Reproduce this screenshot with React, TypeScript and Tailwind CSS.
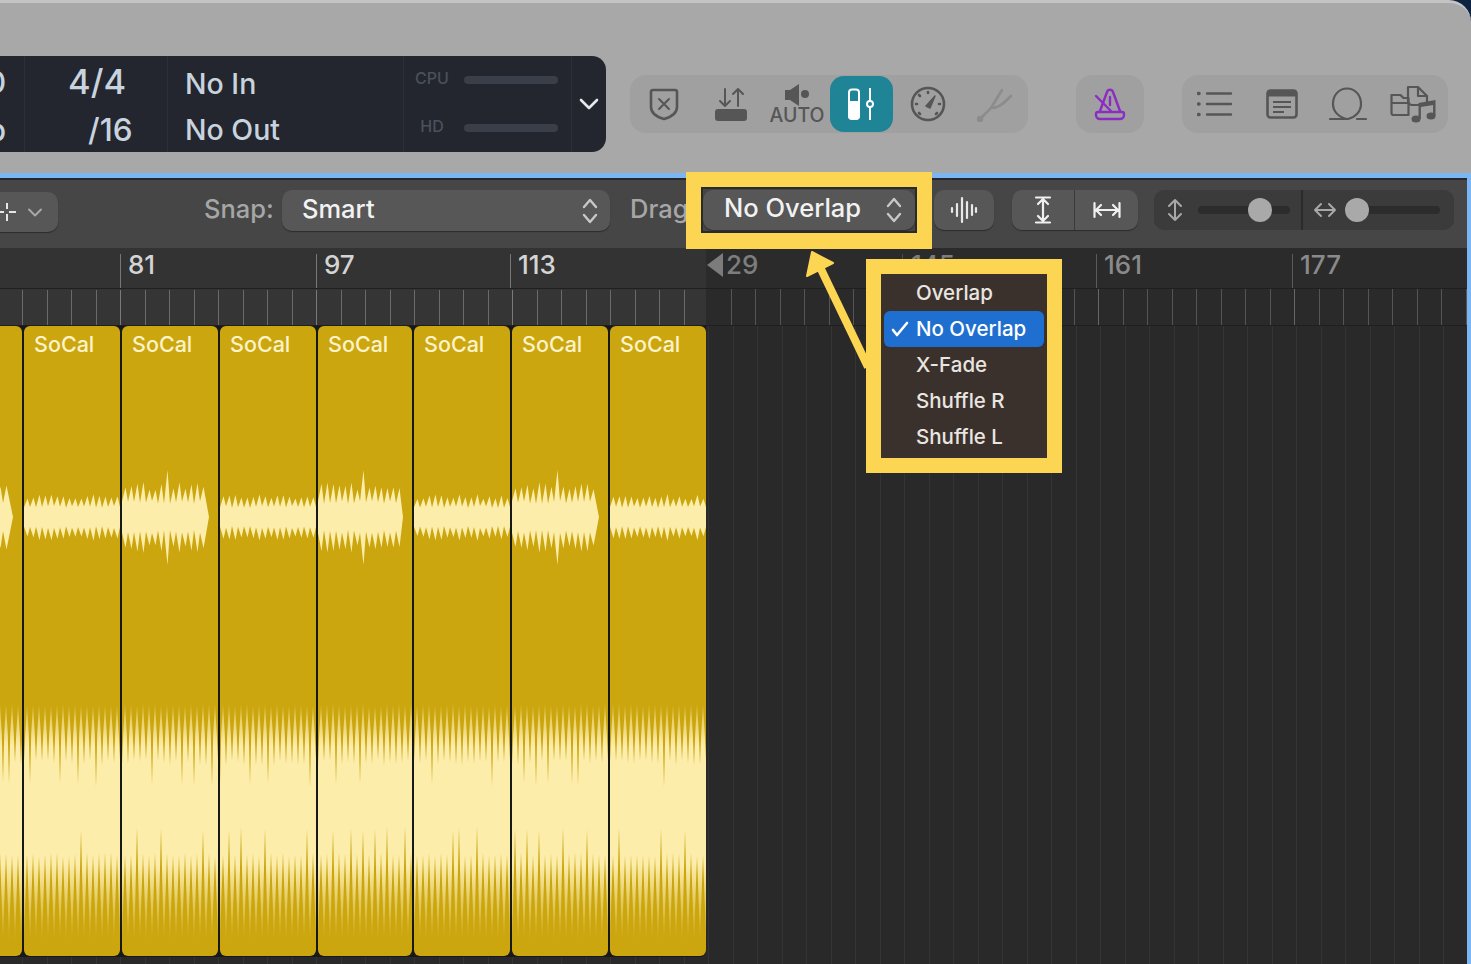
import { useMemo } from 'react'

const FONT = "font-['Inter','Liberation_Sans',sans-serif]"

const GOLD = '#cba60f'
const PALE = '#fcedab'

// small pseudo random so each region keeps the same spikes
const rng = (seed: number) => {
  let s = seed
  return () => {
    s = (s * 9301 + 49297) % 233280
    return s / 233280
  }
}

const buildUpper = (w: number, big: boolean, seed: number) => {
  const r = rng(seed)
  const cy = 191
  const end = big ? w - 9 : w
  const top: string[] = []
  const bottom: string[] = []
  for (let x = 0; x < end - 5; x += 6) {
    let peak = big ? 27 + r() * 8 : 18 + r() * 5
    const valley = big ? 13 + r() * 3 : 9 + r() * 2
    if (big && x >= 42 && x < 48) peak = 47
    top.push(`L${x} ${cy - valley} L${x + 3.5} ${cy - peak}`)
    bottom.unshift(`L${x + 3.5} ${cy + peak + 1} L${x} ${cy + valley}`)
  }
  const tip = big ? `L${end} ${cy}` : `L${end} ${cy - 10} L${end} ${cy + 10}`
  return `M0 ${cy} ${top.join(' ')} ${tip} ${bottom.join(' ')} Z`
}

const buildLower = (w: number, seed: number) => {
  const r = rng(seed)
  const top: string[] = []
  const bottom: string[] = []
  for (let x = 0; x < w; x += 6) {
    const deep = r() > 0.78
    top.push(`L${x} ${434 + r() * 6 + (deep ? 22 : 0)} L${x + 1.2} ${408} L${x + 3} ${377 + r() * 3} L${x + 4.8} ${408}`)
    const high = r() > 0.82
    bottom.unshift(`L${x + 6} ${621} L${x + 5} ${585} L${x + 3} ${530 - r() * 4 - (high ? 26 : 0)} L${x + 1} ${585}`)
  }
  return `M0 434 ${top.join(' ')} L${w} 434 ${bottom.join(' ')} L0 621 Z`
}

function Waveform({ w, big, seed }: { w: number; big: boolean; seed: number }) {
  const upper = useMemo(() => buildUpper(w, big, seed), [w, big, seed])
  const lower = useMemo(() => buildLower(w, seed + 7), [w, seed])
  return (
    <svg className="absolute inset-0" width={w} height={630} viewBox={`0 0 ${w} 630`}>
      <defs>
        <linearGradient id="lowerFill" gradientUnits="userSpaceOnUse" x1="0" y1="377" x2="0" y2="621">
          <stop offset="0" stopColor="#dcbd3f" />
          <stop offset="0.18" stopColor={PALE} />
          <stop offset="0.66" stopColor={PALE} />
          <stop offset="0.98" stopColor={GOLD} />
        </linearGradient>
      </defs>
      <path d={upper} fill={PALE} />
      <path d={lower} fill="url(#lowerFill)" />
    </svg>
  )
}

// x positions follow the reference: every other region has the louder take
const REGIONS = [
  { w: 97, big: true, ml: '-ml-[75px]', label: false },
  { w: 96, big: false, ml: 'ml-[2px]', label: true },
  { w: 96, big: true, ml: 'ml-[2px]', label: true },
  { w: 96, big: false, ml: 'ml-[2px]', label: true },
  { w: 94, big: true, ml: 'ml-[2px]', label: true },
  { w: 96, big: false, ml: 'ml-[2px]', label: true },
  { w: 96, big: true, ml: 'ml-[2px]', label: true },
  { w: 96, big: false, ml: 'ml-[2px]', label: true },
]

const TICKS = Array.from({ length: 61 }, (_, i) => i)

const BARS = [
  { w: 'w-[196px]', label: '81', tone: 'bg-[#333333] text-[#d4d4d4]' },
  { w: 'w-[194px]', label: '97', tone: 'bg-[#333333] text-[#d4d4d4]' },
  { w: 'w-[196px]', label: '113', tone: 'bg-[#333333] text-[#d4d4d4]' },
]

function Stepper({ className = 'text-[#c8c8c8]' }: { className?: string }) {
  return (
    <svg className={className} width="18" height="30" viewBox="0 0 18 30" fill="none" stroke="currentColor" strokeWidth="2.4" strokeLinecap="round" strokeLinejoin="round">
      <path d="M3 11 9 4l6 7" />
      <path d="M3 19l6 7 6-7" />
    </svg>
  )
}

function LcdBar({ label }: { label: string }) {
  return (
    <div className="flex items-center h-[48px]">
      <span className="w-[60px] pr-[4px] pb-[4px] text-center text-[16px] text-[#4a515c]">{label}</span>
      <div className="w-[94px] h-[8px] rounded-full bg-[#3a3e48]" />
    </div>
  )
}

function Lcd() {
  return (
    <div className="flex shrink-0 h-[96px] w-[706px] rounded-[14px] bg-[#23262f] text-[#c8d3de]">
      <div className="w-[125px] pr-[18px] pt-[2px] flex flex-col items-end border-r border-[#2c2f38] text-[30px] leading-[48px]">
        <span className="whitespace-nowrap">120</span>
        <span className="whitespace-nowrap">Keep</span>
      </div>
      <div className="w-[143px] pt-[2px] flex flex-col border-r border-[#2c2f38] leading-[48px]">
        <span className="pl-[43px] text-[34.500px]">4/4</span>
        <span className="pl-[63px] text-[31.500px]">/16</span>
      </div>
      <div className="w-[236px] pl-[17px] flex flex-col border-r border-[#2c2f38] text-[28.500px] leading-[46px] pt-[5px]">
        <span>No In</span>
        <span>No Out</span>
      </div>
      <div className="w-[168px] flex flex-col border-r border-[#2c2f38]">
        <LcdBar label="CPU" />
        <LcdBar label="HD" />
      </div>
      <div className="flex-1 flex items-center justify-center">
        <svg width="20" height="14" viewBox="0 0 20 14" fill="none" stroke="#e4e8ec" strokeWidth="2.6" strokeLinecap="round" strokeLinejoin="round">
          <path d="M2 3l8 8 8-8" />
        </svg>
      </div>
    </div>
  )
}

function HeaderIcons() {
  const s = { fill: 'none', stroke: '#565656', strokeWidth: 2.6, strokeLinecap: 'round', strokeLinejoin: 'round' } as const
  return (
    <div className="flex items-center w-[398px] h-[58px] rounded-[16px] bg-[#a0a0a0] ml-[24px] text-[#565656]">
      <svg className="ml-[18px]" width="32" height="34" viewBox="0 0 32 34" {...s}>
        <path d="M5 3h22a2 2 0 0 1 2 2v15c0 6-6 10-13 12C9 30 3 26 3 20V5a2 2 0 0 1 2-2z" />
        <path d="M11 12l10 10M21 12 11 22" strokeWidth="2" />
      </svg>
      <svg className="ml-[34px]" width="34" height="34" viewBox="0 0 34 34">
        <g {...s} strokeWidth="2">
          <path d="M11 2v17M6 14l5 5 5-5" />
          <path d="M24 19V2M19 7l5-5 5 5" />
        </g>
        <rect x="1" y="22" width="32" height="12" rx="3" fill="#565656" />
      </svg>
      <div className="ml-[20px] w-[58px] flex flex-col items-center">
        <svg width="26" height="22" viewBox="0 0 26 22" fill="#565656">
          <path d="M1 6h5l9-6v22l-9-6H1z" />
          <circle cx="21" cy="10" r="4" />
        </svg>
        <span className="text-[19.500px] leading-[20px] -mt-[1px]">AUTO</span>
      </div>
      <div className="ml-[4px] w-[63px] h-[56px] rounded-[14px] bg-[#1f8496] flex items-center justify-center">
        <svg width="32" height="32" viewBox="0 0 32 32" fill="none" stroke="#fff" strokeWidth="2">
          <rect x="3" y="1.500" width="10" height="29" rx="3" />
          <path d="M3 14h10v14a3 3 0 0 1-3 3H6a3 3 0 0 1-3-3z" fill="#fff" />
          <path d="M24 0v13M24 19v13" />
          <circle cx="24" cy="16" r="3" />
        </svg>
      </div>
      <svg className="ml-[17px]" width="36" height="36" viewBox="0 0 36 36" {...s}>
        <circle cx="18" cy="18" r="16" />
        <path d="M16 20l9-10-5 12z" fill="#565656" strokeWidth="1.500" />
        <path d="M18 6v1M9 9l1 1M6 18h1M9 27l1 1M27 27l-1 1M30 18h-1" />
      </svg>
      <svg className="ml-[31px]" width="36" height="36" viewBox="0 0 36 36" fill="none" stroke="#8c8c8c" strokeWidth="2.600" strokeLinecap="round">
        <path d="M3 33l11-11M14 22 25 4M14 22c7 0 11-3 20-12" />
        <circle cx="3" cy="33" r="2" fill="#8c8c8c" />
      </svg>
    </div>
  )
}

function TopBar() {
  const s = { fill: 'none', stroke: '#565656', strokeWidth: 2.6, strokeLinecap: 'round', strokeLinejoin: 'round' } as const
  return (
    <div className="bg-[#0d2140]">
      <div className="h-[173px] rounded-tr-[22px] bg-[#a8a8a8] border-t-[3px] border-[#c4c4c4] pt-[53px] pr-[23px] flex justify-end items-start">
        <Lcd />
        <div className="mt-[19px] flex">
          <HeaderIcons />
          <div className="ml-[48px] w-[68px] h-[58px] rounded-[16px] bg-[#a0a0a0] flex items-center justify-center">
            <svg width="34" height="34" viewBox="0 0 34 34" fill="none" stroke="#8b2cc4" strokeWidth="2.400" strokeLinecap="round" strokeLinejoin="round">
              <path d="M7 24 14 5c1-3 5-3 6 0l7 19" />
              <path d="M5 25h24a2 2 0 0 1 2 2v1a4 4 0 0 1-4 4H7a4 4 0 0 1-4-4v-1a2 2 0 0 1 2-2z" />
              <path d="M3 9l15 15" />
              <path d="M17 10v8" />
            </svg>
          </div>
          <div className="ml-[38px] w-[266px] h-[58px] rounded-[16px] bg-[#a0a0a0] flex items-center text-[#565656]">
            <svg className="ml-[15px]" width="36" height="28" viewBox="0 0 36 28" {...s} strokeWidth="2.400">
              <path d="M1.500 3.500h.5M1.500 14h.5M1.500 24.500h.5" strokeWidth="3.500" />
              <path d="M10 3.500h24M10 14h24M10 24.500h24" />
            </svg>
            <svg className="ml-[33px]" width="32" height="30" viewBox="0 0 32 30">
              <rect x="1.500" y="1.500" width="29" height="27" rx="3" fill="none" stroke="#565656" strokeWidth="2.600" />
              <rect x="1.500" y="1.500" width="29" height="6" fill="#565656" />
              <path d="M7 13h18M7 18h18M7 23h11" stroke="#565656" strokeWidth="2" />
            </svg>
            <svg className="ml-[31px]" width="38" height="34" viewBox="0 0 38 34" {...s} strokeWidth="2.200">
              <path d="M1 32h17C9 30 4 24 4 17 4 8 10 1.500 18 1.500S32 8 32 17c0 7-5 13-13 15" />
              <path d="M28 32h9" />
            </svg>
            <svg className="ml-[23px]" width="48" height="38" viewBox="0 0 48 38">
              <g fill="none" stroke="#565656" strokeWidth="2.200" strokeLinejoin="round">
                <path d="M1.500 10h9l3 3h5v17H3.500a2 2 0 0 1-2-2zM1.500 18h17" />
                <path d="M18 2h10l9 9v9H22c-2 0-4-2-4-4z" />
                <path d="M28 2v9h9" />
              </g>
              <g fill="#565656">
                <ellipse cx="26" cy="34" rx="4.500" ry="3.500" />
                <ellipse cx="41" cy="31" rx="4.500" ry="3.500" />
                <path d="M28.500 34V18l17-3v16h-2.400V20l-12.200 2v12z" />
              </g>
            </svg>
          </div>
        </div>
      </div>
    </div>
  )
}

function ToolBar() {
  const btn = 'bg-[#575757] rounded-[10px] shadow-[0_1px_1px_#2c2c2c]'
  return (
    <div className="h-[68px] bg-[#464646] flex items-start pt-[10px] text-[25.500px]">
      <div className={`${btn} -ml-[12px] w-[70px] h-[40px] mt-[2px] flex items-center text-[#e0e0e0]`}>
        <svg className="ml-[10px]" width="18" height="18" viewBox="0 0 18 18" stroke="#e6e6e6" strokeWidth="2">
          <path d="M0 9h6M11 9h7M9 0v6M9 11v7" />
        </svg>
        <svg className="ml-[12px]" width="14" height="9" viewBox="0 0 14 9" fill="none" stroke="#a8a8a8" strokeWidth="2" strokeLinecap="round" strokeLinejoin="round">
          <path d="M1 1.500l6 6 6-6" />
        </svg>
      </div>
      <span className="ml-[146px] w-[78px] leading-[38px] text-[#a6a6a6]">Snap:</span>
      <div className={`${btn} w-[328px] h-[41px] flex items-center justify-between pl-[20px] pr-[11px] text-[#f2f2f2]`}>
        <span className="-mt-[3px]">Smart</span>
        <Stepper />
      </div>
      <span className="ml-[20px] w-[73px] leading-[38px] text-[#a6a6a6] overflow-hidden">Drag</span>
      <div className={`${btn} w-[212px] h-[40px] flex items-center justify-between pl-[21px] pr-[12px] text-[#f2f2f2]`}>
        <span className="-mt-[3px]">No Overlap</span>
        <Stepper />
      </div>
      <div className={`${btn} ml-[19px] w-[60px] h-[40px] flex items-center justify-center`}>
        <svg width="28" height="28" viewBox="0 0 28 28" stroke="#e8e8e8" strokeWidth="2.200" strokeLinecap="round">
          <path d="M2 12v4M7 8v12M12 2v24M17 6v16M22 9v10M26 12v4" />
        </svg>
      </div>
      <div className={`${btn} ml-[18px] w-[126px] h-[40px] flex`}>
        <div className="w-[63px] flex items-center justify-center border-r border-[#3a3a3a]">
          <svg width="18" height="28" viewBox="0 0 18 28" fill="none" stroke="#f0f0f0" strokeWidth="2.200" strokeLinecap="round">
            <path d="M2 1.500h14M2 26.500h14M9 3v22M4 8l5-5 5 5M4 20l5 5 5-5" />
          </svg>
        </div>
        <div className="flex-1 flex items-center justify-center">
          <svg width="28" height="18" viewBox="0 0 28 18" fill="none" stroke="#f0f0f0" strokeWidth="2.200" strokeLinecap="round">
            <path d="M1.500 2v14M26.500 2v14M3 9h22M8 4 3 9l5 5M20 4l5 5-5 5" />
          </svg>
        </div>
      </div>
      <div className="ml-[16px] w-[300px] h-[40px] rounded-[10px] bg-[#3b3b3b] flex items-center">
        <div className="w-[149px] h-full flex items-center border-r-2 border-[#2b2b2b]">
          <svg className="ml-[13px]" width="16" height="24" viewBox="0 0 16 24" fill="none" stroke="#a8a8a8" strokeWidth="2" strokeLinecap="round" strokeLinejoin="round">
            <path d="M8 2v20M2 8l6-6 6 6M2 16l6 6 6-6" />
          </svg>
          <div className="relative ml-[15px] w-[92px] h-[8px] rounded-full bg-[#2c2c2c]">
            <div className="absolute left-[50px] -top-[8px] w-[24px] h-[24px] rounded-full bg-[#a9a9a9]" />
          </div>
        </div>
        <svg className="ml-[10px]" width="24" height="16" viewBox="0 0 24 16" fill="none" stroke="#a8a8a8" strokeWidth="2" strokeLinecap="round" strokeLinejoin="round">
          <path d="M2 8h20M8 2 2 8l6 6M16 2l6 6-6 6" />
        </svg>
        <div className="relative ml-[8px] w-[95px] h-[8px] rounded-full bg-[#2c2c2c]">
          <div className="absolute left-0 -top-[8px] w-[24px] h-[24px] rounded-full bg-[#a9a9a9]" />
        </div>
      </div>
    </div>
  )
}

function Ruler() {
  return (
    <div className="h-[40px] flex text-[26px] leading-[22px] bg-[#2b2b2b]">
      <div className="w-[120px] bg-[#333333] shrink-0" />
      {BARS.map((b) => (
        <div key={b.label} className={`${b.w} ${b.tone} shrink-0 pt-[6px]`}>
          <div className="h-[34px] border-l border-[#777777] pl-[7px]">{b.label}</div>
        </div>
      ))}
      <div className="w-[196px] shrink-0 text-[#7d7d7d] flex pt-[6px] relative">
        <svg className="absolute left-0 top-[4px]" width="18" height="26" viewBox="0 0 18 26" fill="#7c7c7c">
          <path d="M17 1v24L1 13z" />
        </svg>
        <span className="pl-[20px]">29</span>
      </div>
      <div className="w-[194px] shrink-0 pt-[6px] text-[#7d7d7d]">
        <div className="h-[34px] border-l border-[#4a4a4a] pl-[8px]">145</div>
      </div>
      <div className="w-[196px] shrink-0 pt-[6px] text-[#8a8a8a]">
        <div className="h-[34px] border-l border-[#5a5a5a] pl-[7px]">161</div>
      </div>
      <div className="flex-1 pt-[6px] text-[#8a8a8a]">
        <div className="h-[34px] border-l border-[#5a5a5a] pl-[7px]">177</div>
      </div>
    </div>
  )
}

function Ticks() {
  return (
    <div className="h-[38px] flex overflow-hidden border-t border-b border-[#1f1f1f]">
      <div className="w-[706px] shrink-0 bg-[#353535] flex overflow-hidden">
        <div className="flex shrink-0 -ml-[2.500px] pt-[1px]">
          {TICKS.slice(0, 30).map((i) => (
            <div key={i} className={`w-[24.500px] shrink-0 border-l ${i % 8 === 5 ? 'border-[#7a7a7a]' : 'border-[#6a6a6a]'}`} />
          ))}
        </div>
      </div>
      <div className="flex-1 bg-[#2a2a2a] flex overflow-hidden">
        <div className="flex shrink-0 ml-[24.500px]">
          {TICKS.slice(0, 31).map((i) => (
            <div key={i} className={`w-[24.500px] shrink-0 border-l ${i % 8 === 7 ? 'border-[#666666]' : 'border-[#555555]'}`} />
          ))}
        </div>
      </div>
    </div>
  )
}

function Tracks() {
  return (
    <div className="relative h-[638px] bg-[#292929] overflow-hidden">
      <div className="absolute inset-0 flex -ml-[2.500px]">
        {TICKS.map((i) => (
          <div key={i} className="w-[24.500px] shrink-0 border-l border-[#343434]" />
        ))}
      </div>
      <div className="relative w-[706px] h-[631px] bg-[#17181a] rounded-br-[6px] flex">
        {REGIONS.map((r, i) => (
          <div
            key={i}
            className={`relative ${r.ml} shrink-0 h-[630px] rounded-[6px] bg-[#cba60f] overflow-hidden`}
            style={{ width: r.w }}
          >
            <Waveform w={r.w} big={r.big} seed={i * 131 + 17} />
            {r.label && <span className="absolute left-[10px] top-[4px] text-[21.500px] leading-[28px] text-[#fdf3c9]">SoCal</span>}
          </div>
        ))}
      </div>
    </div>
  )
}

function Menu() {
  const items = ['Overlap', 'No Overlap', 'X-Fade', 'Shuffle R', 'Shuffle L']
  return (
    <div className="absolute left-[866px] top-[259px] w-[196px] h-[214px] border-[15px] border-[#fcd652] bg-[#3b312c] pt-[1px] text-[20.500px] leading-[36px] text-[#e9e5e1]">
      {items.map((t) => (
        <div key={t} className="relative h-[36px] pl-[35px]">
          {t === 'No Overlap' && <div className="absolute left-[3px] right-[3px] inset-y-0 rounded-[6px] bg-[#1f6fd1]" />}
          {t === 'No Overlap' && (
            <svg className="absolute left-[10px] top-[10px]" width="18" height="16" viewBox="0 0 18 16" fill="none" stroke="#fff" strokeWidth="2.600" strokeLinecap="round" strokeLinejoin="round">
              <path d="M2 9l4 5L16 2" />
            </svg>
          )}
          <span className={`relative ${t === 'No Overlap' ? 'text-white' : ''}`}>{t}</span>
        </div>
      ))}
    </div>
  )
}

export default function App() {
  return (
    <div className={`relative w-[1471px] h-[964px] overflow-hidden bg-[#2a2a2a] font-medium ${FONT}`}>
      <TopBar />
      <div className="border-t-[5px] border-r-[4px] border-[#7ab6f4]">
        <div className="border-t-[2px] border-[#26282b]">
          <ToolBar />
          <Ruler />
          <Ticks />
          <Tracks />
        </div>
      </div>

      {/* annotation on top of the screenshot */}
      <div className="absolute left-[686px] top-[172px] w-[246px] h-[77px] border-t-[15px] border-b-[16px] border-l-[15px] border-r-[15px] border-[#fcd652] shadow-[inset_0_0_0_2px_#2a2a2a]" />
      <svg className="absolute left-[800px] top-[245px]" width="80" height="135" viewBox="0 0 80 135">
        <path d="M7 31 12 7l21 11z" fill="#fcd652" stroke="#fcd652" strokeWidth="2" strokeLinejoin="round" />
        <path d="M19 20 68 122" stroke="#fcd652" strokeWidth="8" />
      </svg>
      <Menu />
    </div>
  )
}
